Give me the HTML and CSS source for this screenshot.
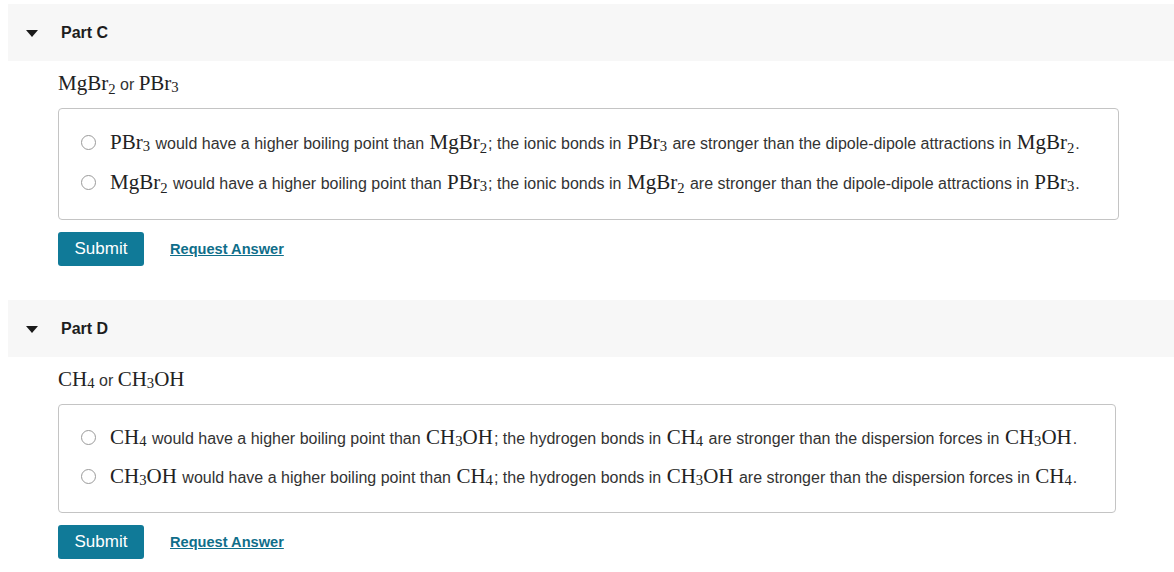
FILE: index.html
```html
<!DOCTYPE html>
<html>
<head>
<meta charset="utf-8">
<link rel="stylesheet" href="styles.css">
</head>
<body>
<div class="page">
  <section class="part">
    <div class="part-head"><span class="caret"></span><span class="part-title">Part C</span></div>
    <div class="part-body">
      <div class="prompt"><span class="m">MgBr<sub class="lo">2</sub></span> or <span class="m">PBr<sub class="hi">3</sub></span></div>
      <div class="choices">
        <label class="choice"><input type="radio" name="c"><span><span class="m">PBr<sub class="hi">3</sub></span> would have a higher boiling point than <span class="m">MgBr<sub class="lo">2</sub></span>; the ionic bonds in <span class="m">PBr<sub class="hi">3</sub></span> are stronger than the dipole-dipole attractions in <span class="m">MgBr<sub class="lo">2</sub></span>.</span></label>
        <label class="choice"><input type="radio" name="c"><span><span class="m">MgBr<sub class="lo">2</sub></span> would have a higher boiling point than <span class="m">PBr<sub class="hi">3</sub></span>; the ionic bonds in <span class="m">MgBr<sub class="lo">2</sub></span> are stronger than the dipole-dipole attractions in <span class="m">PBr<sub class="hi">3</sub></span>.</span></label>
      </div>
      <div class="actions"><button class="submit">Submit</button><a class="request" href="#">Request Answer</a></div>
    </div>
  </section>
  <section class="part">
    <div class="part-head"><span class="caret"></span><span class="part-title">Part D</span></div>
    <div class="part-body">
      <div class="prompt"><span class="m">CH<sub class="hi">4</sub></span> or <span class="m">CH<sub class="hi">3</sub>OH</span></div>
      <div class="choices tight">
        <label class="choice"><input type="radio" name="d"><span><span class="m">CH<sub class="hi">4</sub></span> would have a higher boiling point than <span class="m">CH<sub class="hi">3</sub>OH</span>; the hydrogen bonds in <span class="m">CH<sub class="hi">4</sub></span> are stronger than the dispersion forces in <span class="m">CH<sub class="hi">3</sub>OH</span>.</span></label>
        <label class="choice"><input type="radio" name="d"><span><span class="m">CH<sub class="hi">3</sub>OH</span> would have a higher boiling point than <span class="m">CH<sub class="hi">4</sub></span>; the hydrogen bonds in <span class="m">CH<sub class="hi">3</sub>OH</span> are stronger than the dispersion forces in <span class="m">CH<sub class="hi">4</sub></span>.</span></label>
      </div>
      <div class="actions"><button class="submit">Submit</button><a class="request" href="#">Request Answer</a></div>
    </div>
  </section>
</div>
</body>
</html>
```
FILE: styles.css
```css
html, body {
  margin: 0;
  padding: 0;
  background: #fff;
}
body {
  font-family: "Liberation Sans", Arial, sans-serif;
  font-size: 16px;
  color: #333;
}
.page {
  padding: 4px 0 0 8px;
}
.part {
  margin-bottom: 34px;
}
.part-head {
  height: 57px;
  background: #f7f7f7;
  display: flex;
  align-items: center;
  padding-left: 18px;
}
.caret {
  width: 0;
  height: 0;
  border-left: 6px solid transparent;
  border-right: 6px solid transparent;
  border-top: 7px solid #1a1a1a;
  margin-right: 23px;
  margin-top: 1px;
}
.part-title {
  font-weight: bold;
  font-size: 16px;
  color: #1d1d1d;
}
.part-body {
  padding-left: 50px;
}
.prompt {
  margin-top: 10px;
  margin-bottom: 13px;
  line-height: 24px;
  height: 24px;
  color: #333;
}
.m {
  font-family: "Liberation Serif", "Times New Roman", serif;
  font-size: 21px;
  color: #222;
}
.choice .m {
  margin: 0 1px;
}
sub {
  font-size: 70%;
  line-height: 0;
}
sub.lo {
  vertical-align: -4px;
}
sub.hi {
  vertical-align: -2px;
}
.choices {
  display: inline-block;
  border: 1px solid #c4c4c4;
  border-radius: 4px;
  padding: 13px 38px 17px 22px;
}
.choices.tight {
  padding: 13px 38px 16px 22px;
}
.choices.tight .choice {
  height: 39px;
}
.choice {
  display: flex;
  align-items: center;
  height: 40px;
  white-space: nowrap;
}
.choice input {
  appearance: none;
  -webkit-appearance: none;
  box-sizing: border-box;
  width: 15px;
  height: 15px;
  margin: 0 13px 0 0;
  border: 1px solid #9a9a9a;
  border-radius: 50%;
  background: #fff;
  flex: none;
}
.actions {
  display: flex;
  align-items: center;
  margin-top: 12px;
}
.submit {
  width: 86px;
  height: 34px;
  border: none;
  border-radius: 3px;
  background: #107a98;
  color: #fff;
  font-family: "Liberation Sans", Arial, sans-serif;
  font-size: 17px;
  padding: 0;
}
.request {
  margin-left: 26px;
  font-weight: bold;
  font-size: 14.6px;
  color: #0f6e8a;
  text-decoration: underline;
}
```
